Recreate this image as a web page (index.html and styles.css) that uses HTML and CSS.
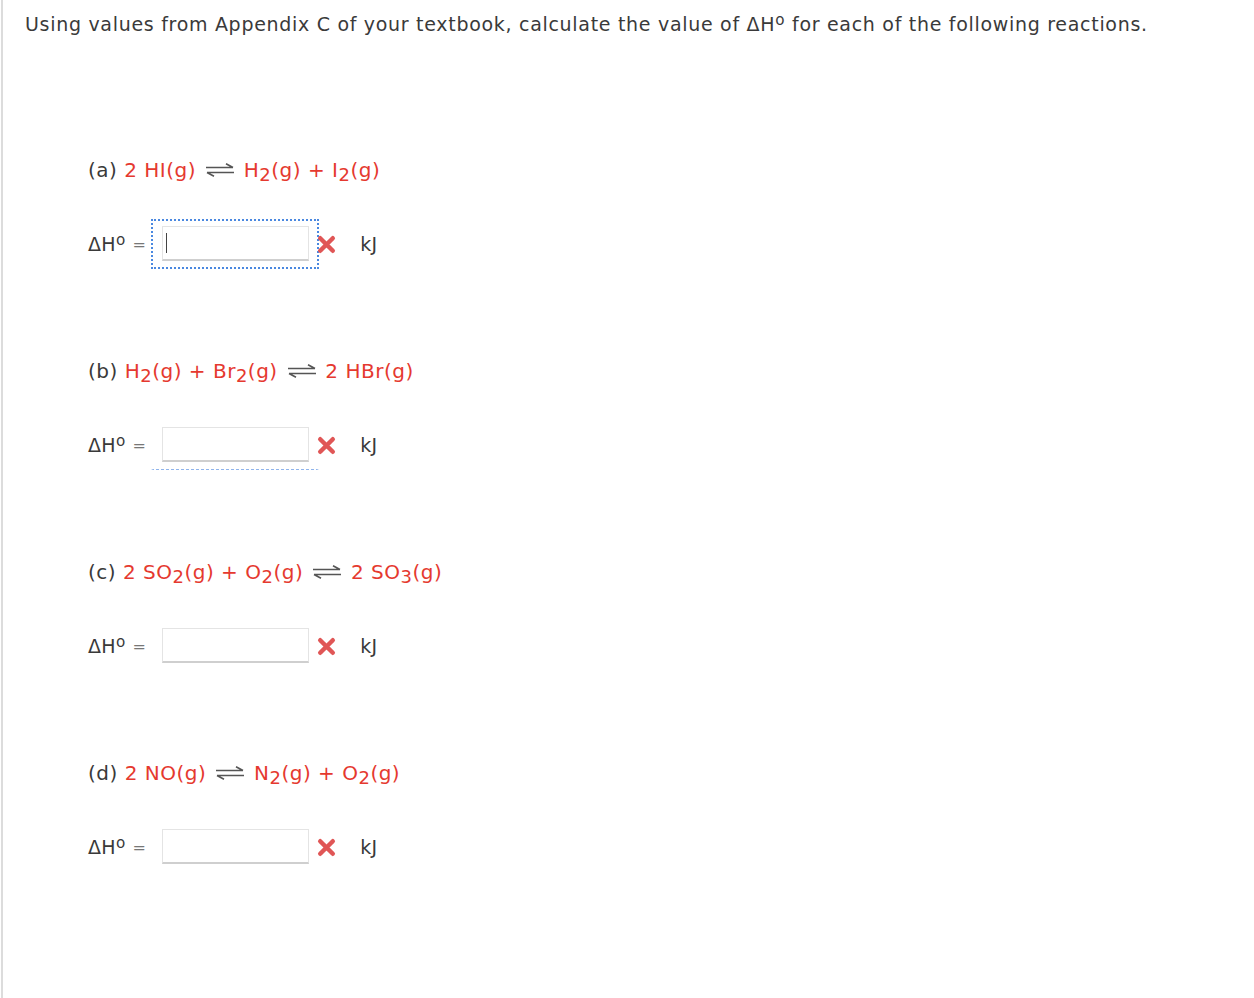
FILE: index.html
```html
<!DOCTYPE html>
<html>
<head>
<meta charset="utf-8">
<link rel="stylesheet" href="styles.css">
</head>
<body>
<div class="page">
  <p class="title">Using values from Appendix C of your textbook, calculate the value of &Delta;H<sup class="deg">o</sup> for each of the following reactions.</p>

  <div class="part">
    <div class="rxn"><span class="lbl">(a)</span> <span class="red">2 HI(g) <svg class="eq" viewBox="0 0 30 14" width="30" height="14"><path d="M1 4.5H28M28 4.5L21 0.8M29 9.5H2M2 9.5L9 13.2" stroke="#555" stroke-width="1.6" fill="none"/></svg> H<sub>2</sub>(g) + I<sub>2</sub>(g)</span></div>
    <div class="row">
      <span class="dh">&Delta;H<sup class="deg">o</sup></span><span class="eqs">=</span>
      <span class="wrap focus"><span class="box"><span class="caret"></span></span></span>
      <svg class="x" viewBox="0 0 20 20" width="21" height="21"><path d="M4 4L16 16M16 4L4 16" stroke="#e05656" stroke-width="4.2" stroke-linecap="round"/></svg>
      <span class="unit">kJ</span>
    </div>
  </div>

  <div class="part">
    <div class="rxn"><span class="lbl">(b)</span> <span class="red">H<sub>2</sub>(g) + Br<sub>2</sub>(g) <svg class="eq" viewBox="0 0 30 14" width="30" height="14"><path d="M1 4.5H28M28 4.5L21 0.8M29 9.5H2M2 9.5L9 13.2" stroke="#555" stroke-width="1.6" fill="none"/></svg> 2 HBr(g)</span></div>
    <div class="row">
      <span class="dh">&Delta;H<sup class="deg">o</sup></span><span class="eqs">=</span>
      <span class="wrap hover"><span class="box"></span></span>
      <svg class="x" viewBox="0 0 20 20" width="21" height="21"><path d="M4 4L16 16M16 4L4 16" stroke="#e05656" stroke-width="4.2" stroke-linecap="round"/></svg>
      <span class="unit">kJ</span>
    </div>
  </div>

  <div class="part">
    <div class="rxn"><span class="lbl">(c)</span> <span class="red">2 SO<sub>2</sub>(g) + O<sub>2</sub>(g) <svg class="eq" viewBox="0 0 30 14" width="30" height="14"><path d="M1 4.5H28M28 4.5L21 0.8M29 9.5H2M2 9.5L9 13.2" stroke="#555" stroke-width="1.6" fill="none"/></svg> 2 SO<sub>3</sub>(g)</span></div>
    <div class="row">
      <span class="dh">&Delta;H<sup class="deg">o</sup></span><span class="eqs">=</span>
      <span class="wrap"><span class="box"></span></span>
      <svg class="x" viewBox="0 0 20 20" width="21" height="21"><path d="M4 4L16 16M16 4L4 16" stroke="#e05656" stroke-width="4.2" stroke-linecap="round"/></svg>
      <span class="unit">kJ</span>
    </div>
  </div>

  <div class="part">
    <div class="rxn"><span class="lbl">(d)</span> <span class="red">2 NO(g) <svg class="eq" viewBox="0 0 30 14" width="30" height="14"><path d="M1 4.5H28M28 4.5L21 0.8M29 9.5H2M2 9.5L9 13.2" stroke="#555" stroke-width="1.6" fill="none"/></svg> N<sub>2</sub>(g) + O<sub>2</sub>(g)</span></div>
    <div class="row">
      <span class="dh">&Delta;H<sup class="deg">o</sup></span><span class="eqs">=</span>
      <span class="wrap"><span class="box"></span></span>
      <svg class="x" viewBox="0 0 20 20" width="21" height="21"><path d="M4 4L16 16M16 4L4 16" stroke="#e05656" stroke-width="4.2" stroke-linecap="round"/></svg>
      <span class="unit">kJ</span>
    </div>
  </div>
</div>
</body>
</html>
```
FILE: styles.css
```css
html, body {
  margin: 0;
  padding: 0;
  background: #fff;
}
body {
  font-family: "DejaVu Sans", Verdana, sans-serif;
  color: #3a3a3a;
}
.page {
  border-left: 2px solid #dcdcdc;
  margin-left: 1px;
  min-height: 998px;
  box-sizing: border-box;
  padding: 10px 0 0 22px;
}
.title {
  margin: 0;
  font-size: 19px;
  letter-spacing: 0.7px;
  line-height: 28px;
}
.deg {
  font-size: 0.8em;
  vertical-align: 6px;
  line-height: 0;
}
.part {
  padding-left: 63px;
  margin-top: 118px;
}
.part + .part {
  margin-top: 88px;
}
.rxn {
  font-size: 20px;
  letter-spacing: 0.5px;
  line-height: 28px;
  white-space: nowrap;
}
.lbl { color: #3a3a3a; }
.red { color: #e5392f; }
sub {
  font-size: 0.9em;
  vertical-align: -4px;
  line-height: 0;
}
.eq {
  vertical-align: 0px;
  margin: 0 2px;
}
.row {
  display: flex;
  align-items: center;
  margin-top: 35px;
  font-size: 19px;
  letter-spacing: 0.3px;
}
.dh {
  color: #3a3a3a;
}
.eqs {
  color: #777;
  margin-left: 7px;
  font-size: 16px;
}
.wrap {
  display: flex;
  padding: 5px 8px 6px 9px;
  margin-left: 5px;
  border: 2px dotted transparent;
}
.wrap.focus {
  border-color: #4a88e0;
}
.wrap.hover {
  border-bottom: 1px dashed #8fb4ec;
  padding-bottom: 7px;
}
.box {
  width: 142px;
  height: 32px;
  border: 1px solid #e4e4e4;
  border-bottom: 2px solid #cfcfcf;
  display: flex;
  align-items: center;
  padding-left: 3px;
  box-sizing: content-box;
}
.caret {
  width: 1px;
  height: 20px;
  background: #444;
}
.x {
  margin-left: -3px;
}
.unit {
  margin-left: 23px;
  color: #3a3a3a;
}
```
